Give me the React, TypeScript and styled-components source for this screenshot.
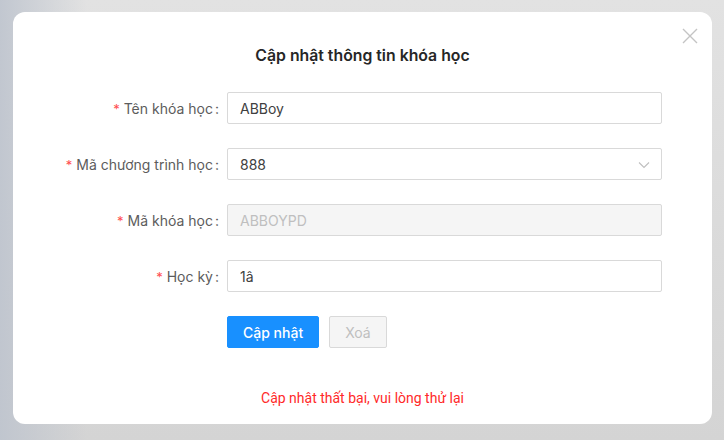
import React from "react";
import styled, { createGlobalStyle } from "styled-components";

const GlobalStyle = createGlobalStyle`
  html, body { margin: 0; padding: 0; }
  body {
    font-family: Inter, "Noto Sans", sans-serif;
    background: #d9d9db;
  }
`;

const Backdrop = styled.div`
  width: 724px;
  height: 440px;
  box-sizing: border-box;
  padding: 12px 12px 16px 13px;
  background:
    linear-gradient(90deg, rgba(190, 196, 206, 0.9) 0%, rgba(220, 221, 223, 0) 12%),
    linear-gradient(180deg, #e2e2e2 0%, #d4d4d4 100%);
`;

const Modal = styled.div`
  position: relative;
  height: 100%;
  background: #fff;
  border-radius: 12px;
  display: flex;
  flex-direction: column;
  align-items: center;
  padding-top: 34px;
  box-sizing: border-box;
`;

const Close = styled.button`
  position: absolute;
  top: 15px;
  right: 13px;
  width: 18px;
  height: 18px;
  padding: 0;
  border: 0;
  background: none;
  color: #c4c4c4;
  display: flex;
`;

const Title = styled.h2`
  margin: 0 0 26px;
  font-size: 15.8px;
  font-weight: 600;
  color: #262626;
  line-height: 20px;
`;

const Form = styled.div`
  display: flex;
  flex-direction: column;
  gap: 24px;
  width: 100%;
`;

const Row = styled.div`
  display: grid;
  grid-template-columns: 214px 435px;
  align-items: center;
`;

const Label = styled.label`
  text-align: right;
  padding-right: 8px;
  font-size: 14px;
  color: #5c5c5c;
  white-space: nowrap;
`;

const Star = styled.span`
  color: #ff4d4f;
  font-size: 13px;
  margin-right: 4px;
`;

const Field = styled.div<{ $disabled?: boolean }>`
  position: relative;
  height: 32px;
  box-sizing: border-box;
  border: 1px solid #d9d9d9;
  border-radius: 2px;
  background: ${(p) => (p.$disabled ? "#f5f5f5" : "#fff")};
  color: ${(p) => (p.$disabled ? "#bfbfbf" : "#404040")};
  font-size: 14px;
  display: flex;
  align-items: center;
  padding: 0 12px;
`;

const Arrow = styled.span`
  position: absolute;
  right: 11px;
  top: 10px;
  color: #bfbfbf;
  display: flex;
`;

const Actions = styled.div`
  display: flex;
  gap: 10px;
  margin-left: 214px;
`;

const Button = styled.button<{ $primary?: boolean }>`
  height: 32px;
  padding: 0 15px;
  border-radius: 2px;
  font-family: Inter, "Noto Sans", sans-serif;
  font-size: 14px;
  box-sizing: border-box;
  border: 1px solid ${(p) => (p.$primary ? "#1890ff" : "#d9d9d9")};
  background: ${(p) => (p.$primary ? "#1890ff" : "#f5f5f5")};
  color: ${(p) => (p.$primary ? "#fff" : "#bfbfbf")};
  font-weight: ${(p) => (p.$primary ? 500 : 400)};
`;

const Error = styled.p`
  margin: 42px 0 0;
  font-family: Roboto, "Noto Sans", sans-serif;
  font-size: 14px;
  color: #ff2929;
`;

const fields = [
  { label: "Tên khóa học", value: "ABBoy" },
  { label: "Mã chương trình học", value: "888", select: true },
  { label: "Mã khóa học", value: "ABBOYPD", disabled: true },
  { label: "Học kỳ", value: "1â" },
];

export default function App() {
  return (
    <>
      <GlobalStyle />
      <Backdrop>
        <Modal>
          <Close aria-label="close">
            <svg width="18" height="18" viewBox="0 0 18 18" fill="none" stroke="currentColor" strokeWidth="1.4">
              <path d="M2 2l14 14M16 2L2 16" />
            </svg>
          </Close>
          <Title>Cập nhật thông tin khóa học</Title>
          <Form>
            {fields.map((f) => (
              <Row key={f.label}>
                <Label>
                  <Star>*</Star>
                  {f.label}
                  <span style={{ marginLeft: 2 }}>:</span>
                </Label>
                <Field $disabled={f.disabled}>
                  {f.value}
                  {f.select && (
                    <Arrow>
                      <svg width="12" height="12" viewBox="0 0 12 12" fill="none" stroke="currentColor" strokeWidth="1.1">
                        <path d="M1 3.5l5 5 5-5" />
                      </svg>
                    </Arrow>
                  )}
                </Field>
              </Row>
            ))}
            <Actions>
              <Button $primary>Cập nhật</Button>
              <Button>Xoá</Button>
            </Actions>
          </Form>
          <Error>Cập nhật thất bại, vui lòng thử lại</Error>
        </Modal>
      </Backdrop>
    </>
  );
}
